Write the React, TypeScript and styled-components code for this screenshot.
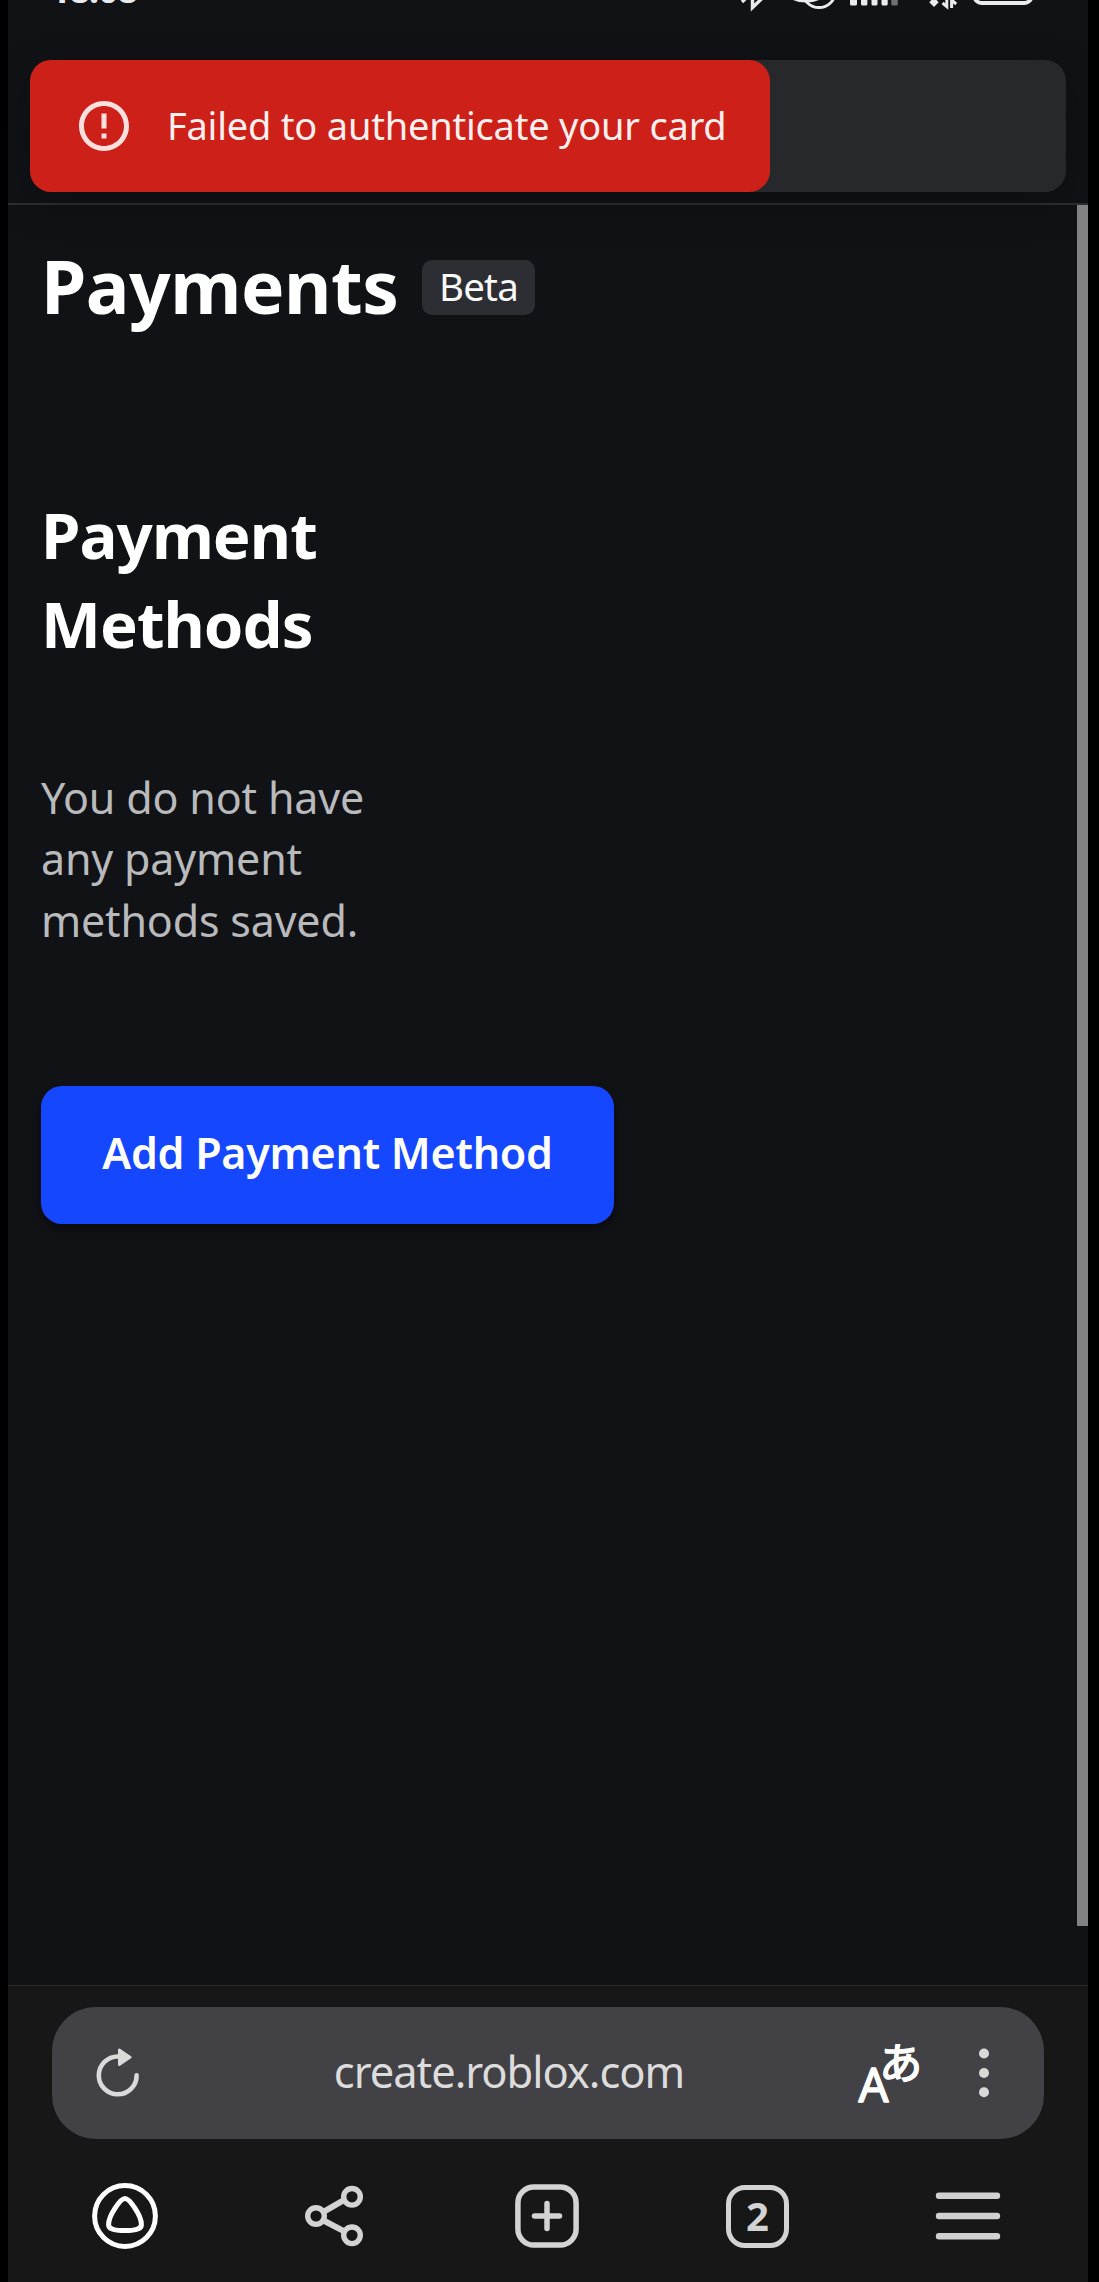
import React from "react";
import styled, { createGlobalStyle } from "styled-components";

const sans = `"Noto Sans", "Open Sans", sans-serif`;

const GlobalStyle = createGlobalStyle`
  * { box-sizing: border-box; }
  html, body { margin: 0; padding: 0; background: #000; }
`;

const Device = styled.div`
  width: 1099px;
  height: 2282px;
  padding: 0 11px 0 8px;
  background: #000;
  overflow: hidden;
  font-family: ${sans};
`;

const Screen = styled.div`
  height: 100%;
  display: flex;
  flex-direction: column;
  background: #111216;
`;

const Header = styled.header`
  height: 205px;
  flex: none;
  border-bottom: 2px solid #2d2e32;
  padding: 0 22px;
`;

const StatusBar = styled.div`
  height: 60px;
  padding: 0 21px 0 20px;
  display: flex;
  justify-content: space-between;
  align-items: flex-start;
  overflow: hidden;
`;

const Clock = styled.span`
  margin-top: -36px;
  font-size: 36px;
  line-height: 52px;
  font-weight: 700;
  letter-spacing: -1.1px;
  color: #e9eaec;
`;

const Toast = styled.div`
  height: 132px;
  border-radius: 21px;
  background: #27282c;
  box-shadow: 0 12px 40px rgba(0, 0, 0, 0.25);
  display: flex;
`;

const ToastBody = styled.div`
  width: 740px;
  border-radius: 21px;
  background: #cd2018;
  padding-left: 44px;
  display: flex;
  align-items: center;
`;

const ToastText = styled.span`
  margin-left: 33px;
  margin-top: -3px;
  font-size: 38px;
  line-height: 54px;
  letter-spacing: -0.21px;
  color: #fff0ef;
  white-space: nowrap;
`;

const Viewport = styled.div`
  flex: 1;
  display: flex;
  justify-content: space-between;
`;

const Content = styled.main`
  padding: 31px 33px 0;
`;

const ScrollThumb = styled.div`
  width: 11px;
  height: 1721px;
  background: #828282;
`;

const TitleRow = styled.div`
  height: 100px;
  display: flex;
  align-items: center;
`;

const Title = styled.h1`
  margin: 0;
  width: 381px;
  font-size: 73px;
  line-height: 100px;
  font-weight: 700;
  letter-spacing: -0.5px;
  color: #fff;
  white-space: nowrap;
`;

const Chip = styled.span`
  margin-top: 3px;
  width: 113px;
  height: 55px;
  border-radius: 10px;
  background: #2d2e33;
  color: #f8f8f9;
  font-size: 38.5px;
  line-height: 53px;
  letter-spacing: -0.8px;
  text-align: center;
`;

const Column = styled.section`
  width: 345px;
`;

const Heading = styled.h2`
  margin: 154px 0 0;
  font-size: 63.5px;
  line-height: 89px;
  font-weight: 700;
  letter-spacing: -0.95px;
  color: #fff;
`;

const Note = styled.p`
  margin: 98.5px 0 0;
  font-size: 43px;
  line-height: 61.5px;
  letter-spacing: -0.18px;
  color: #b9babc;
`;

const AddButton = styled.button`
  display: block;
  margin-top: 135px;
  width: 573px;
  height: 138px;
  padding: 0 0 4px;
  border: 0;
  border-radius: 21px;
  background: #1547ff;
  box-shadow: 0 5px 10px rgba(0, 0, 0, 0.45);
  color: #fff;
  font-family: ${sans};
  font-size: 43px;
  line-height: 60px;
  font-weight: 600;
  letter-spacing: -0.25px;
  white-space: nowrap;
`;

const BrowserBar = styled.footer`
  flex: none;
  height: 297px;
  border-top: 1px solid #2a2a2c;
  background: #171717;
  padding-top: 21px;
`;

const AddressBar = styled.div`
  height: 132px;
  margin: 0 44px;
  border-radius: 44px;
  background: #424145;
  display: flex;
  align-items: center;
  padding: 0 45px 0 38px;
`;

const Url = styled.span`
  flex: 1;
  text-align: center;
  padding: 0 0 4px 15px;
  font-size: 43.5px;
  line-height: 60px;
  letter-spacing: -1.05px;
  color: #dcdcdd;
  white-space: nowrap;
`;

const NavRow = styled.nav`
  height: 154px;
  padding: 0 14.4px 0 11.6px;
  display: grid;
  grid-template-columns: repeat(5, 1fr);
  align-items: center;
  justify-items: center;
`;

const Icon = styled.svg`
  display: block;
  flex: none;
  overflow: visible;
`;

const TabCount = styled.span`
  width: 63px;
  height: 63px;
  border: 5.5px solid #d3d3d3;
  border-radius: 19px;
  display: flex;
  align-items: center;
  justify-content: center;
  color: #d3d3d3;
  font-size: 40px;
  line-height: 50px;
  font-weight: 700;
`;

const StatusIcons = () => (
  <svg width="310" height="14" viewBox="735 0 310 14" fill="none" stroke="#ebebed">
    <path d="M742 2l3-3M752.5-6V7.5L763-2.5" strokeWidth="3.4" />
    <ellipse cx="806" cy="-10" rx="20" ry="11" strokeWidth="3" />
    <circle cx="819" cy="-9" r="16.5" strokeWidth="2.8" />
    <g fill="#ebebed" stroke="none">
      <rect x="850" y="-10" width="7" height="15.6" rx="1.5" />
      <rect x="861" y="-10" width="6.4" height="15.6" rx="1.5" />
      <rect x="871.5" y="-10" width="6" height="15.6" rx="1.5" />
      <rect x="881.5" y="-10" width="6.2" height="15.6" rx="1.5" />
      <rect x="891.3" y="-10" width="6.5" height="15.6" rx="1.5" fill="#6e6f72" />
      <path d="M929.3 2.3l4.7-5 4.7 5-4.7 4.6z" />
    </g>
    <path d="M942.5 3l4.3 3.6V-4M951.6 8V-4M951.6 0l4.6 4" strokeWidth="3" />
    <rect x="974.5" y="-24" width="57" height="27" rx="7" strokeWidth="4" />
  </svg>
);

const ErrorIcon = () => (
  <Icon width="60" height="60" viewBox="0 0 24 24" fill="#ffe0de">
    <path d="M11 15h2v2h-2zm0-8h2v6h-2zm.99-5C6.47 2 2 6.48 2 12s4.47 10 9.99 10C17.52 22 22 17.52 22 12S17.52 2 11.99 2zM12 20c-4.42 0-8-3.58-8-8s3.58-8 8-8 8 3.58 8 8-3.58 8-8 8z" />
  </Icon>
);

const ReloadIcon = () => (
  <Icon width="56" height="60" viewBox="90 2043 56 60" fill="none">
    <path d="M118 2056.5A18.9 18.9 0 1 0 136.6 2075.4" stroke="#dadada" strokeWidth="4.6" strokeLinecap="round" />
    <path d="M119.3 2049.8v15l11-7.5z" fill="#dadada" stroke="#dadada" strokeWidth="2.6" strokeLinejoin="round" />
  </Icon>
);

const TranslateIcon = () => (
  <Icon width="64" height="62" viewBox="858 2042 64 62" fill="#fff" stroke="#fff" strokeLinejoin="round">
    <text x="859.4" y="2101.8" fontFamily={sans} fontSize="47" fontWeight="400" strokeWidth="1.4">A</text>
    <text x="880.3" y="2079.3" fontFamily='"Noto Sans CJK JP", sans-serif' fontSize="43" fontWeight="400" strokeWidth="1.6">あ</text>
  </Icon>
);

const MoreIcon = () => (
  <Icon width="10" height="50" viewBox="0 0 10 50" fill="#dadada">
    <circle cx="5" cy="5.5" r="5" />
    <circle cx="5" cy="25" r="5" />
    <circle cx="5" cy="44.2" r="5" />
  </Icon>
);

const AssistantIcon = () => (
  <Icon width="66" height="66" viewBox="0 0 66 66" fill="none" stroke="#fff" strokeWidth="5">
    <circle cx="33" cy="33" r="30.4" />
    <path d="M33 15.6C37.5 15.6 49.4 32.5 49.4 41.4C49.4 45.5 45.5 47.6 33 47.6S16.6 45.5 16.6 41.4C16.6 32.5 28.5 15.6 33 15.6Z" />
  </Icon>
);

const ShareIcon = () => (
  <Icon width="62" height="62" viewBox="305 2185.5 62 62" fill="none" stroke="#d3d3d3" strokeWidth="5.4">
    <circle cx="316" cy="2216.5" r="8.3" />
    <circle cx="352" cy="2197.3" r="8.3" />
    <circle cx="352" cy="2235.8" r="8.3" />
    <path d="M323.5 2212.3l20.8-12M323.5 2221l20.8 10.8" strokeWidth="6" />
  </Icon>
);

const NewTabIcon = () => (
  <Icon width="64" height="64" viewBox="0 0 64 64" fill="none" stroke="#d3d3d3" strokeWidth="5.5" strokeLinecap="round">
    <rect x="2.9" y="2.9" width="58.2" height="58.2" rx="16" />
    <path d="M32 19.5v25M19.5 32h25" />
  </Icon>
);

const MenuIcon = () => (
  <Icon width="66" height="48" viewBox="0 0 66 48" fill="none" stroke="#d0d0d0" strokeWidth="6.4" strokeLinecap="round">
    <path d="M4 3.8h58M4 24h58M4 44.2h58" />
  </Icon>
);

const MoreSlot = styled.div`
  margin-left: 58px;
  padding-right: 10px;
`;

export default function App() {
  return (
    <>
      <GlobalStyle />
      <Device>
        <Screen>
          <Header>
            <StatusBar>
              <Clock>18:08</Clock>
              <StatusIcons />
            </StatusBar>
            <Toast>
              <ToastBody>
                <ErrorIcon />
                <ToastText>Failed to authenticate your card</ToastText>
              </ToastBody>
            </Toast>
          </Header>
          <Viewport>
            <Content>
              <TitleRow>
                <Title>Payments</Title>
                <Chip>Beta</Chip>
              </TitleRow>
              <Column>
                <Heading>Payment Methods</Heading>
                <Note>You do not have any payment methods saved.</Note>
              </Column>
              <AddButton>Add Payment Method</AddButton>
            </Content>
            <ScrollThumb />
          </Viewport>
          <BrowserBar>
            <AddressBar>
              <ReloadIcon />
              <Url>create.roblox.com</Url>
              <TranslateIcon />
              <MoreSlot>
                <MoreIcon />
              </MoreSlot>
            </AddressBar>
            <NavRow>
              <AssistantIcon />
              <ShareIcon />
              <NewTabIcon />
              <TabCount>2</TabCount>
              <MenuIcon />
            </NavRow>
          </BrowserBar>
        </Screen>
      </Device>
    </>
  );
}
